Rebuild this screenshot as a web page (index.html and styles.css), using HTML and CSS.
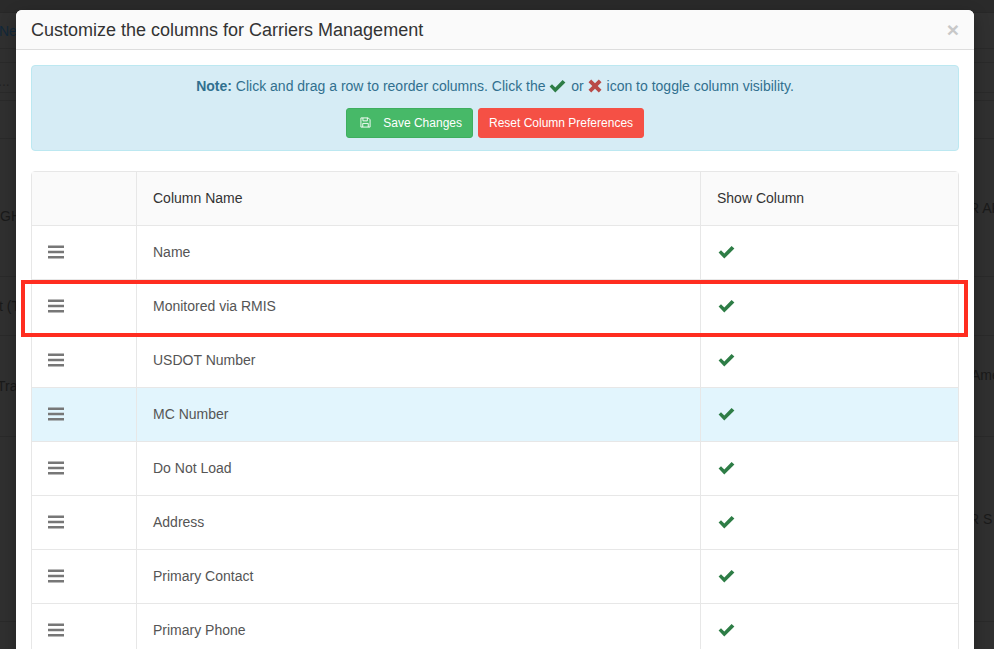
FILE: index.html
```html
<!DOCTYPE html>
<html lang="en">
<head>
  <meta charset="UTF-8">
  <title>Customize Columns</title>
  <meta name="viewport" content="width=device-width, initial-scale=1.0">
  <link rel="stylesheet" href="styles.css">
</head>
<body>

<svg class="icon-defs" width="0" height="0">
  <symbol id="icon-check" viewBox="0 0 17 14">
    <path d="M0.6 7.6 L3 5.2 L6.3 8.4 L13.6 1 L16.4 3.5 L6.3 13.6 Z"/>
  </symbol>
  <symbol id="icon-cross" viewBox="0 0 14 14">
    <path d="M0.5 3.2 L3.2 0.5 L7 4.3 L10.8 0.5 L13.5 3.2 L9.7 7 L13.5 10.8 L10.8 13.5 L7 9.7 L3.2 13.5 L0.5 10.8 L4.3 7 Z"/>
  </symbol>
  <symbol id="icon-bars" viewBox="0 0 16 14">
    <path d="M0 0.5 H16 V3 H0 Z M0 5.7 H16 V8.2 H0 Z M0 11 H16 V13.5 H0 Z"/>
  </symbol>
</svg>

<!-- Page behind the modal -->
<div class="backdrop">
  <div class="backdrop-top"></div>
  <div class="backdrop-row row-a"><span class="left-text text-new">New</span></div>
  <div class="backdrop-row row-blank"></div>
  <div class="backdrop-row row-b"><span class="left-text text-dots">...</span></div>
  <div class="backdrop-row row-thin"></div>
  <div class="backdrop-row row-blank2"></div>
  <div class="backdrop-row row-c"><span class="left-text text-gh">GH</span><span class="right-text">R AP</span></div>
  <div class="backdrop-row row-d"><span class="left-text text-t">t (T</span></div>
  <div class="backdrop-row row-e"><span class="left-text text-tran">Tran</span><span class="right-text text-ame">Ame</span></div>
  <div class="backdrop-row row-f"><span class="right-text text-rs">R S</span></div>
</div>

<div class="modal">
  <div class="modal-header">
    <h4>Customize the columns for Carriers Management</h4>
    <span class="close">×</span>
  </div>

  <div class="modal-body">
    <div class="note">
      <p>
        <strong>Note:</strong> Click and drag a row to reorder columns. Click the
        <svg class="note-check"><use href="#icon-check"/></svg> or
        <svg class="note-cross"><use href="#icon-cross"/></svg> icon to toggle column visibility.
      </p>
      <div class="note-buttons">
        <button class="btn btn-save">
          <svg class="save-icon" viewBox="0 0 12 12">
            <path d="M1 1 H9 L11 3 V11 H1 Z M3.2 1 V4.2 H8 V1 M3 11 V7 H9 V11" fill="none" stroke="#fff" stroke-width="1"/>
          </svg>
          Save Changes
        </button>
        <button class="btn btn-reset">Reset Column Preferences</button>
      </div>
    </div>

    <table class="columns-table">
      <thead>
        <tr>
          <th class="col-handle"></th>
          <th>Column Name</th>
          <th class="col-show">Show Column</th>
        </tr>
      </thead>
      <tbody>
        <tr>
          <td><svg class="bars"><use href="#icon-bars"/></svg></td>
          <td>Name</td>
          <td><svg class="check"><use href="#icon-check"/></svg></td>
        </tr>
        <tr>
          <td><svg class="bars"><use href="#icon-bars"/></svg></td>
          <td>Monitored via RMIS</td>
          <td><svg class="check"><use href="#icon-check"/></svg></td>
        </tr>
        <tr>
          <td><svg class="bars"><use href="#icon-bars"/></svg></td>
          <td>USDOT Number</td>
          <td><svg class="check"><use href="#icon-check"/></svg></td>
        </tr>
        <tr class="active">
          <td><svg class="bars"><use href="#icon-bars"/></svg></td>
          <td>MC Number</td>
          <td><svg class="check"><use href="#icon-check"/></svg></td>
        </tr>
        <tr>
          <td><svg class="bars"><use href="#icon-bars"/></svg></td>
          <td>Do Not Load</td>
          <td><svg class="check"><use href="#icon-check"/></svg></td>
        </tr>
        <tr>
          <td><svg class="bars"><use href="#icon-bars"/></svg></td>
          <td>Address</td>
          <td><svg class="check"><use href="#icon-check"/></svg></td>
        </tr>
        <tr>
          <td><svg class="bars"><use href="#icon-bars"/></svg></td>
          <td>Primary Contact</td>
          <td><svg class="check"><use href="#icon-check"/></svg></td>
        </tr>
        <tr>
          <td><svg class="bars"><use href="#icon-bars"/></svg></td>
          <td>Primary Phone</td>
          <td><svg class="check"><use href="#icon-check"/></svg></td>
        </tr>
      </tbody>
    </table>
  </div>
</div>

<!-- Annotation drawn over the screenshot -->
<div class="highlight"></div>

</body>
</html>
```

FILE: styles.css
```css
html, body {
  margin: 0;
  height: 100%;
  overflow: hidden;
}

body {
  font-family: "Liberation Sans", Arial, sans-serif;
  font-size: 14px;
  color: #555;
  background-color: #303030;
}

.icon-defs {
  position: absolute;
}

/* page behind the modal */
.backdrop {
  position: absolute;
  inset: 0;
  color: #1a1a1a;
  font-size: 14px;
}

.backdrop-top {
  height: 12px;
  background-color: #2a2a2a;
  border-bottom: 1px solid #272727;
}

.backdrop-row {
  display: flex;
  align-items: center;
  box-sizing: border-box;
  border-bottom: 1px solid #2a2a2a;
}

.row-a { height: 36px; }
.row-blank { height: 14px; }
.row-b { height: 30px; }
.row-thin { height: 8px; }
.row-blank2 { height: 38px; }
.row-c { height: 138px; }
.row-d { height: 59px; }
.row-e { height: 101px; }
.row-f { height: 185px; }

.left-text {
  white-space: nowrap;
}

.text-new { margin-left: -1px; color: #12283a; }
.text-dots { margin: 6px 0 0 -2px; color: #222; }
.text-gh { margin-top: 16px; }
.text-t { margin-left: -1px; }
.text-tran { margin-left: -3px; }

.right-text {
  margin-left: auto;
  width: 25px;
  white-space: nowrap;
  overflow: hidden;
}

.text-ame { width: 23px; margin-top: -22px; }
.text-rs { margin-top: -20px; }

/* modal */
.modal {
  position: absolute;
  top: 10px;
  left: 16px;
  width: 958px;
  height: 700px;
  background: #fff;
  border-radius: 6px 6px 0 0;
  box-shadow: 0 5px 15px rgba(0, 0, 0, .3);
}

.modal-header {
  display: flex;
  justify-content: space-between;
  align-items: center;
  height: 38px;
  padding: 1px 15px 0;
  background: #fafafa;
  border-bottom: 1px solid #ddd;
  border-radius: 6px 6px 0 0;
}

.modal-header h4 {
  margin: 0;
  font-size: 18px;
  font-weight: normal;
  color: #333;
}

.close {
  font-size: 21px;
  font-weight: bold;
  color: #c8c8c8;
}

.modal-body {
  padding: 15px;
}

.note {
  height: 84px;
  margin-bottom: 20px;
  border: 1px solid #bce8f1;
  border-radius: 4px;
  background: #d6ecf5;
  color: #31708f;
  text-align: center;
}

.note p {
  margin: 0;
  padding-top: 12px;
  line-height: 17px;
}

.note-check {
  width: 17px;
  height: 14px;
  margin-right: 1px;
  vertical-align: -2px;
  fill: #2e7d46;
}

.note-cross {
  width: 14px;
  height: 14px;
  margin-right: 1px;
  vertical-align: -2px;
  fill: #b94a48;
}

.note-buttons {
  display: flex;
  justify-content: center;
  gap: 5px;
  margin-top: 13px;
}

.btn {
  height: 30px;
  padding: 0 10px;
  font-family: inherit;
  font-size: 12px;
  color: #fff;
  border-radius: 3px;
  border: 1px solid transparent;
}

.btn-save {
  background: #47b968;
  border-color: #3fae5f;
  padding: 0 10px 0 13px;
}

.btn-reset {
  background: #f55045;
  border-color: #f55045;
}

.save-icon {
  width: 11px;
  height: 11px;
  margin-right: 9px;
  vertical-align: -1px;
}

/* columns table */
.columns-table {
  width: 928px;
  border-collapse: separate;
  border-spacing: 0;
  table-layout: fixed;
  border: 1px solid #e7e7e7;
  border-radius: 4px;
}

.columns-table th,
.columns-table td {
  height: 54px;
  padding: 0 16px 2px;
  text-align: left;
  font-weight: normal;
  border-left: 1px solid #e7e7e7;
  border-bottom: 1px solid #e7e7e7;
  box-sizing: border-box;
}

.columns-table th:first-child,
.columns-table td:first-child {
  border-left: 0;
}

.columns-table td:last-child {
  padding-left: 17px;
}

.columns-table th {
  background: #fafafa;
  color: #333;
}

.col-handle {
  width: 104px;
}

.col-show {
  width: 258px;
}

.active td {
  background: #e2f5fd;
}

.bars {
  display: block;
  width: 16px;
  height: 14px;
  fill: #777;
}

.check {
  display: block;
  width: 17px;
  height: 14px;
  fill: #2e7d46;
}

.highlight {
  position: absolute;
  left: 21px;
  top: 280px;
  width: 939px;
  height: 49px;
  border: 4px solid #ff2d20;
}
```
